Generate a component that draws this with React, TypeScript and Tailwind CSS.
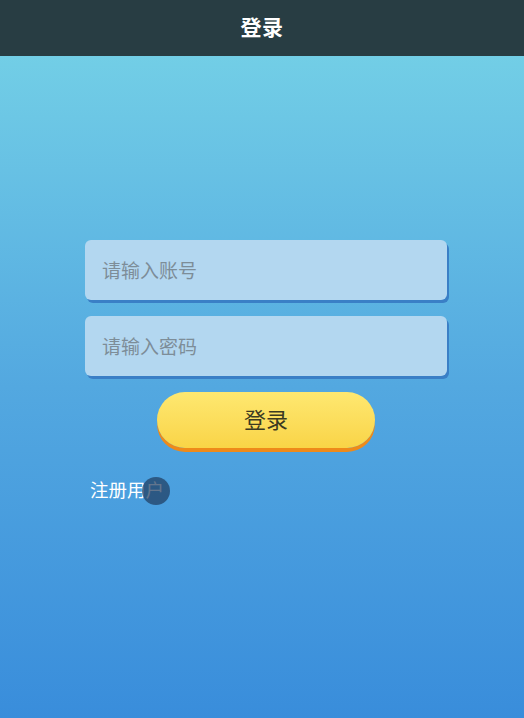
import { useState } from 'react';

// Simple login screen — header bar, two fields, a pill button and a register link
export default function App() {
  const [account, setAccount] = useState('');
  const [password, setPassword] = useState('');

  return (
    <div
      className="w-[524px] h-[718px] flex flex-col overflow-hidden"
      style={{ fontFamily: '"Liberation Sans", "Noto Sans CJK SC", sans-serif' }}
    >
      {/* Header */}
      <header className="h-14 flex-none bg-[#283d43] flex items-center justify-center">
        <h1 className="text-white text-[21px] font-bold tracking-wide">登录</h1>
      </header>

      {/* Body */}
      <main className="flex-1 bg-gradient-to-b from-[#72cee6] via-[#53a8e0] to-[#398ddb]">
        <div className="ml-[85px] w-[362px] mt-[184px] flex flex-col">
          <input
            value={account}
            onChange={(e) => setAccount(e.target.value)}
            placeholder="请输入账号"
            className="h-[60px] rounded-md bg-[#b3d7f0] px-[17px] pt-[4px] text-[19px] text-[#333] placeholder:text-[#7d8d98] outline-none shadow-[2px_3px_0_#3a7fc6]"
          />
          <input
            type="password"
            value={password}
            onChange={(e) => setPassword(e.target.value)}
            placeholder="请输入密码"
            className="mt-[16px] h-[60px] rounded-md bg-[#b3d7f0] px-[17px] pt-[4px] text-[19px] text-[#333] placeholder:text-[#7d8d98] outline-none shadow-[2px_3px_0_#3a7fc6]"
          />

          <button className="mt-[16px] ml-[72px] w-[218px] h-[56px] rounded-full bg-gradient-to-b from-[#fee870] to-[#f9d446] text-[#3b3a22] text-[22px] shadow-[0_4px_0_#ee8a1a]">
            登录
          </button>
        </div>

        {/* Register link with touch marker */}
        <div className="ml-[90px] mt-[29px] relative w-fit">
          <span className="text-white text-[18.5px]">注册用户</span>
          <span className="absolute left-[52px] top-[0px] w-[28px] h-[28px] rounded-full bg-[#1f3a5c]/70" />
        </div>
      </main>
    </div>
  );
}
